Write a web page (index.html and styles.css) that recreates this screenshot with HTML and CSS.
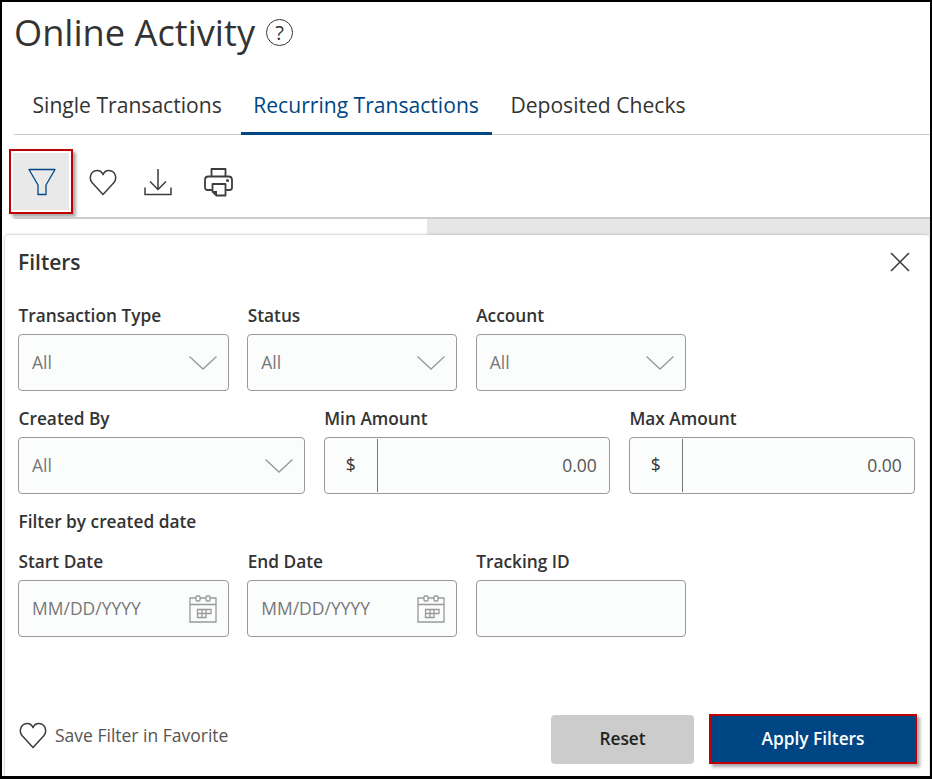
FILE: index.html
```html
<!DOCTYPE html>
<html lang="en">
<head>
    <meta charset="UTF-8">
    <meta name="viewport" content="width=device-width, initial-scale=1.0">
    <title>Online Activity</title>
    <link rel="stylesheet" href="styles.css">
</head>
<body>
    <div class="frame">
        <div class="title-row">
            <h1>Online Activity</h1>
            <span class="help">?</span>
        </div>
        <div class="tabs">
            <a class="tab">Single Transactions</a>
            <a class="tab active">Recurring Transactions</a>
            <a class="tab">Deposited Checks</a>
        </div>
        <div class="toolbar">
            <button class="tool tool-filter">
                <svg width="28" height="28" viewBox="0 0 28 28"><path d="M1 1.500H27L18 17V26.500H10V17Z" fill="none" stroke="#004684" stroke-width="1.300" stroke-linejoin="round"/></svg>
            </button>
            <button class="tool tool-heart">
                <svg width="28" height="28" viewBox="0 0 28 28"><path d="M14 26.5L3.2 14.8C-.2 11 1.2 4 6.5 2.8 9.8 2.1 12.6 3.6 14 6.6 15.4 3.6 18.2 2.1 21.5 2.8 26.8 4 28.2 11 24.8 14.8Z" fill="none" stroke="#3c3c3c" stroke-width="1.5" stroke-linejoin="round"/></svg>
            </button>
            <button class="tool tool-download">
                <svg width="28" height="28" viewBox="0 0 28 28"><path d="M14 1V21M6 13.5L14 21.5 22 13.5M1 19.5V26.5H27V19.5" fill="none" stroke="#3c3c3c" stroke-width="1.5"/></svg>
            </button>
            <button class="tool tool-print">
                <svg width="30" height="30" viewBox="0 0 30 30"><path d="M7.5 10V2H21.5V10M7.5 23H3.5C2 23 1 22 1 20.500V13C1 11 2.500 9.500 4.500 9.500H24.500C26.500 9.500 28 11 28 13V20.500C28 22 27 23 25.500 23H22.500M8.500 17H21.500V28.500H12.500L8.500 24.500Z" fill="none" stroke="#3c3c3c" stroke-width="1.8" stroke-linejoin="round"/><path d="M8.500 24H13V28.500Z" fill="#3c3c3c"/><circle cx="23.500" cy="13.500" r="1.500" fill="#3c3c3c"/></svg>
            </button>
        </div>
        <div class="strip"></div>

        <div class="panel">
            <div class="panel-head">
                <h2>Filters</h2>
                <svg class="close" width="20" height="20" viewBox="0 0 20 20"><path d="M1 1L19 19M19 1L1 19" stroke="#3c3c3c" stroke-width="1.5"/></svg>
            </div>

            <div class="row row-narrow">
                <div class="field">
                    <label>Transaction Type</label>
                    <div class="control">
                        <span class="value">All</span>
                        <svg class="chevron" width="28" height="14" viewBox="0 0 28 14"><path d="M0.500 0.500L14 13 27.500 0.500" fill="none" stroke="#999" stroke-width="1.300"/></svg>
                    </div>
                </div>
                <div class="field">
                    <label>Status</label>
                    <div class="control">
                        <span class="value">All</span>
                        <svg class="chevron" width="28" height="14" viewBox="0 0 28 14"><path d="M0.500 0.500L14 13 27.500 0.500" fill="none" stroke="#999" stroke-width="1.300"/></svg>
                    </div>
                </div>
                <div class="field">
                    <label>Account</label>
                    <div class="control">
                        <span class="value">All</span>
                        <svg class="chevron" width="28" height="14" viewBox="0 0 28 14"><path d="M0.500 0.500L14 13 27.500 0.500" fill="none" stroke="#999" stroke-width="1.300"/></svg>
                    </div>
                </div>
            </div>

            <div class="row row-wide">
                <div class="field">
                    <label>Created By</label>
                    <div class="control">
                        <span class="value">All</span>
                        <svg class="chevron" width="28" height="14" viewBox="0 0 28 14"><path d="M0.500 0.500L14 13 27.500 0.500" fill="none" stroke="#999" stroke-width="1.300"/></svg>
                    </div>
                </div>
                <div class="field">
                    <label>Min Amount</label>
                    <div class="control control-money">
                        <span class="currency">$</span>
                        <span class="amount">0.00</span>
                    </div>
                </div>
                <div class="field">
                    <label>Max Amount</label>
                    <div class="control control-money">
                        <span class="currency">$</span>
                        <span class="amount">0.00</span>
                    </div>
                </div>
            </div>

            <div class="group-label">Filter by created date</div>

            <div class="row row-narrow row-dates">
                <div class="field">
                    <label>Start Date</label>
                    <div class="control">
                        <span class="value">MM/DD/YYYY</span>
                        <svg class="calendar" width="28" height="28" viewBox="0 0 28 28"><path d="M7 3H1V27H27V3H21M11 3H17M1 9.500H27M8.500 14.500H22V18.500H8.500ZM8.500 18.500H17V22.500H8.500ZM13 14.500V22.500M17 14.500V22.500" fill="none" stroke="#999" stroke-width="1.300"/><rect x="7" y="1" width="4" height="5" rx="1" fill="none" stroke="#999" stroke-width="1.300"/><rect x="17" y="1" width="4" height="5" rx="1" fill="none" stroke="#999" stroke-width="1.300"/></svg>
                    </div>
                </div>
                <div class="field">
                    <label>End Date</label>
                    <div class="control">
                        <span class="value">MM/DD/YYYY</span>
                        <svg class="calendar" width="28" height="28" viewBox="0 0 28 28"><path d="M7 3H1V27H27V3H21M11 3H17M1 9.500H27M8.500 14.500H22V18.500H8.500ZM8.500 18.500H17V22.500H8.500ZM13 14.500V22.500M17 14.500V22.500" fill="none" stroke="#999" stroke-width="1.300"/><rect x="7" y="1" width="4" height="5" rx="1" fill="none" stroke="#999" stroke-width="1.300"/><rect x="17" y="1" width="4" height="5" rx="1" fill="none" stroke="#999" stroke-width="1.300"/></svg>
                    </div>
                </div>
                <div class="field">
                    <label>Tracking ID</label>
                    <div class="control"></div>
                </div>
            </div>

            <div class="panel-foot">
                <div class="save-filter">
                    <svg width="28" height="28" viewBox="0 0 28 28"><path d="M14 26.500L3.200 14.800C-.2 11 1.200 4 6.500 2.800 9.800 2.100 12.600 3.600 14 6.600 15.400 3.600 18.200 2.100 21.500 2.800 26.800 4 28.200 11 24.800 14.800Z" fill="none" stroke="#3c3c3c" stroke-width="1.500" stroke-linejoin="round"/></svg>
                    <span>Save Filter in Favorite</span>
                </div>
                <button class="btn btn-reset">Reset</button>
                <button class="btn btn-apply">Apply Filters</button>
            </div>
        </div>
    </div>
</body>
</html>
```

FILE: styles.css
```css
* {
    box-sizing: border-box;
}
body {
    margin: 0;
    background: #fff;
    font-family: "Open Sans", Arial, sans-serif;
    color: #333;
}
.frame {
    width: 932px;
    height: 779px;
    display: flex;
    flex-direction: column;
    border: 2px solid #000;
    border-bottom-width: 3px;
    overflow: hidden;
}
.title-row {
    display: flex;
    align-items: center;
    height: 60px;
    padding-left: 12px;
}
h1 {
    margin: 0;
    font-size: 36.2px;
    font-weight: 400;
    color: #333;
}
.help {
    width: 27px;
    height: 27px;
    margin-left: 11px;
    border: 1.5px solid #333;
    border-radius: 50%;
    display: flex;
    align-items: center;
    justify-content: center;
    font-size: 20px;
}
.tabs {
    display: flex;
    margin: 18px 0 0 12px;
    height: 55px;
    padding-left: 6px;
    border-bottom: 1px solid #ccc;
}
.tab {
    height: 55px;
    padding: 9.5px 13px 0 12.5px;
    margin-right: 6px;
    font-size: 21.1px;
    color: #333;
}
.tab.active {
    color: #004684;
    border-bottom: 3px solid #004684;
}
.toolbar {
    display: flex;
    align-items: center;
    margin: 14px 0 0 8px;
    height: 68px;
    padding: 1px 0 4px;
}
.tool {
    border: none;
    background: none;
    padding: 0;
    display: flex;
    align-items: center;
    justify-content: center;
}
.tool-filter {
    width: 64px;
    height: 65px;
    margin-left: -1px;
    padding-left: 2px;
    border: 2px solid #c00000;
    outline: 2px solid #fff;
    outline-offset: -4px;
    background: #e9e9e9;
    box-shadow: 3px 3px 3px #aaa;
}
.tool-heart {
    margin-left: 16px;
}
.tool-download {
    margin-left: 27px;
}
.tool-print {
    margin-left: 32px;
}
.strip {
    height: 18px;
    margin-left: 12px;
    border-top: 2px solid #ccc;
    background: linear-gradient(to right, #fff 413px, #e6e6e6 413px);
}
.panel {
    flex: 1;
    display: flex;
    flex-direction: column;
    width: 924px;
    margin-left: 3px;
    padding: 0 14px 12px 13px;
    background: #fff;
    border-radius: 4px 4px 0 0;
    box-shadow: 0 0 3px #aaa;
}
.panel-head {
    display: flex;
    align-items: center;
    justify-content: space-between;
    height: 53px;
    margin-bottom: 15px;
    padding-right: 5px;
}
h2 {
    margin: 0;
    font-size: 21px;
    font-weight: 600;
    color: #333;
}
.row {
    display: grid;
    column-gap: 18.5px;
}
.row-narrow {
    grid-template-columns: 210.7px 210px 210px;
}
.row-wide {
    grid-template-columns: 286.7px 286.2px 286px;
    column-gap: 19px;
    margin-top: 15px;
}
.row-dates {
    margin-top: 14px;
}
label {
    display: block;
    height: 31px;
    padding: 1px 0 0 0.5px;
    font-size: 17.3px;
    font-weight: 600;
    color: #333;
}
.group-label {
    margin-top: 16px;
    height: 25px;
    padding-left: 0.5px;
    font-size: 17.3px;
    font-weight: 600;
    color: #333;
}
.control {
    height: 57px;
    display: flex;
    align-items: center;
    justify-content: space-between;
    padding: 0 11px 0 13px;
    background: #fbfdfd;
    border: 1px solid #999;
    border-radius: 4px;
}
.value {
    margin-bottom: 2px;
    font-size: 17.5px;
    color: #777;
}
.chevron {
    margin-top: 1px;
}
.control-money {
    padding: 0;
}
.currency {
    width: 53px;
    height: 53px;
    line-height: 51px;
    text-align: center;
    font-size: 17.5px;
    border-right: 1px solid #777;
}
.amount {
    flex: 1;
    margin-bottom: 2px;
    padding-right: 12px;
    text-align: right;
    font-size: 17.5px;
    color: #555;
}
.panel-foot {
    margin: auto -2px 0 1px;
    display: flex;
    align-items: center;
}
.save-filter {
    display: flex;
    align-items: center;
    gap: 8px;
    margin: 0 auto 10px 0;
    font-size: 17.5px;
    color: #555;
}
.btn {
    height: 49px;
    padding-bottom: 3px;
    border: none;
    border-radius: 4px;
    font-family: inherit;
    font-size: 17.3px;
    font-weight: 600;
}
.btn-reset {
    width: 143px;
    background: #ccc;
    color: #222;
}
.btn-apply {
    width: 208px;
    height: 50px;
    margin-left: 15px;
    margin-top: -2px;
    padding-bottom: 2px;
    border: 2px solid #c00000;
    border-radius: 0;
    background: #004684;
    color: #fff;
    box-shadow: 3px 3px 3px #aaa;
}
```
